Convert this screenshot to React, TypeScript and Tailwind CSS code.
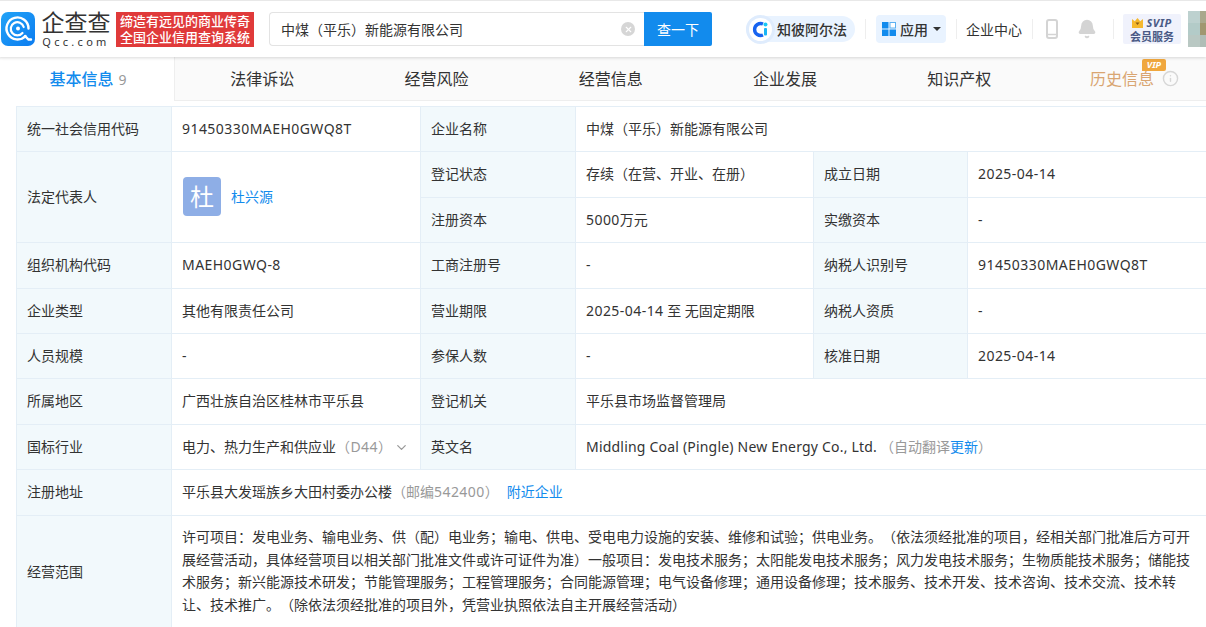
import { ReactNode } from "react";
import { ChevronDown, Bell, Info, X } from "lucide-react";

const FONT = "font-['Noto_Sans','Noto_Sans_CJK_SC',sans-serif] [text-spacing-trim:space-all]";

function Logo() {
  return (
    <svg width="34" height="34" viewBox="0 0 34 34" className="shrink-0">
      <defs>
        <linearGradient id="qcc" x1="0" y1="0" x2="1" y2="1">
          <stop offset="0" stopColor="#22a3f7" />
          <stop offset="1" stopColor="#0b7cf0" />
        </linearGradient>
      </defs>
      <rect width="34" height="34" rx="7" fill="url(#qcc)" />
      <path d="M24.5 24a11 11 0 1 1 3-7.5" fill="none" stroke="#fff" strokeWidth="2.4" strokeLinecap="round" />
      <path d="M21.5 21a6.6 6.6 0 1 1 1.2-6" fill="none" stroke="#fff" strokeWidth="2.2" strokeLinecap="round" />
      <circle cx="17" cy="16.5" r="2" fill="#fff" />
      <path d="M24 24l3.5 3.5h2.5" fill="none" stroke="#fff" strokeWidth="2.4" strokeLinecap="round" />
    </svg>
  );
}

function Avatar() {
  return (
    <div className="ml-[7px] grid h-[36px] flex-1 grid-cols-[12px_1fr] grid-rows-3">
      <div className="bg-[#bdd1cf]" />
      <div className="bg-[#a9a88c]" />
      <div className="bg-[#b3cbc8]" />
      <div className="bg-[#a09770]" />
      <div className="bg-[#b9c8c3]" />
      <div className="bg-[#b0bdb6]" />
    </div>
  );
}

function Header() {
  return (
    <header className="relative z-10 flex h-[57px] items-center border-t border-[#e8e8e8] bg-white pl-px shadow-[0_1px_3px_rgba(0,0,0,0.15)]">
      <Logo />
      <div className="ml-[6px] flex w-[70px] shrink-0 flex-col items-center leading-none text-[#333]">
        <span className="text-[23px] leading-[23px]">企查查</span>
        <span className="mt-[2px] whitespace-nowrap text-[11px] leading-[11px] tracking-[3.3px]">Qcc.com</span>
      </div>
      <div className="ml-[5px] flex h-[35px] w-[138px] shrink-0 flex-col items-center justify-center bg-[#e03a3a] text-[13px] font-medium leading-[16px] text-white">
        <span>缔造有远见的商业传奇</span>
        <span>全国企业信用查询系统</span>
      </div>
      <div className="ml-[15px] flex h-[34px] w-[375px] shrink-0 items-center rounded-l-[4px] border border-r-0 border-[#e3e3e3] pl-[11px] pr-[9px] text-[14px] text-[#333]">
        <span className="flex-1">中煤（平乐）新能源有限公司</span>
        <span className="flex h-[14px] w-[14px] items-center justify-center rounded-full bg-[#d6d6d6]">
          <X size={9} color="#fff" strokeWidth={3} />
        </span>
      </div>
      <button className="h-[34px] w-[68px] shrink-0 rounded-r-[2px] bg-[#128bed] text-[14px] text-white">查一下</button>
      <div className="ml-[34px] flex h-[26px] w-[109px] shrink-0 items-center rounded-full bg-[#e9f3ff] text-[14px] font-medium text-[#333]">
        <svg width="29" height="29" viewBox="0 0 29 29" className="shrink-0">
          <circle cx="14.5" cy="14.5" r="14.5" fill="#dfecfd" />
          <circle cx="14.5" cy="14.5" r="11.5" fill="#fff" />
          <path d="M17 9a6 6 0 1 0 0 11" fill="none" stroke="#1763f0" strokeWidth="3.4" />
          <rect x="18" y="13" width="3" height="7.5" rx="1" fill="#19b5f5" />
          <circle cx="19.5" cy="9.5" r="2" fill="#19c8f5" />
        </svg>
        <span className="ml-[2px]">知彼阿尔法</span>
      </div>
      <div className="ml-[10px] h-[20px] w-px bg-[#eee]" />
      <div className="ml-[10px] flex h-[28px] w-[70px] shrink-0 items-center rounded-[4px] bg-[#e9f3ff] pl-[6px] text-[14px] font-medium text-[#333]">
        <svg width="14" height="14" viewBox="0 0 14 14" className="shrink-0">
          <rect width="6.5" height="6.5" fill="#128bed" />
          <rect x="8" y=".5" width="5.5" height="5.5" fill="#fff" stroke="#5bb0f2" />
          <rect y="7.5" width="6.5" height="6.5" fill="#128bed" />
          <rect x="7.5" y="7.5" width="6.5" height="6.5" fill="#128bed" />
        </svg>
        <span className="ml-[4px]">应用</span>
        <span className="ml-[5px] h-0 w-0 border-x-[4px] border-t-[4px] border-x-transparent border-t-[#333]" />
      </div>
      <div className="ml-[10px] h-[20px] w-px bg-[#eee]" />
      <span className="ml-[9px] w-[56px] shrink-0 text-[14px] text-[#333]">企业中心</span>
      <div className="ml-[10px] h-[20px] w-px bg-[#eee]" />
      <svg width="12" height="20" viewBox="0 0 12 20" className="ml-[13px] shrink-0">
        <rect x="1" y="1" width="10" height="18" rx="2" fill="none" stroke="#d4d4d4" strokeWidth="2" />
        <path d="M1 15.5h10" stroke="#d4d4d4" strokeWidth="1.5" />
      </svg>
      <Bell size={20} color="#d4d4d4" fill="#d4d4d4" className="ml-[19px] shrink-0" />
      <div className="ml-[16px] h-[20px] w-px bg-[#eee]" />
      <div className="ml-[9px] flex h-[30px] w-[58px] shrink-0 flex-col items-center justify-center rounded-[2px] bg-[#f0f2fc] text-[#4a5a85]">
        <span className="flex items-center text-[11px] font-bold italic leading-[14px] tracking-[0.5px]">
          <svg width="11" height="10" viewBox="0 0 11 10" className="mr-[3px]">
            <path d="M0 1l2.8 2.2L5.500 0l2.700 3.200L11 1v9H0z" fill="#f5b82e" />
            <path d="M3.500 4.500h4L5.500 7z" fill="#8a5a10" />
          </svg>
          SVIP
        </span>
        <span className="text-[11px] font-bold leading-[13px]">会员服务</span>
      </div>
      <Avatar />
    </header>
  );
}

const TABS = ["法律诉讼", "经营风险", "经营信息", "企业发展", "知识产权"];

function Tabs() {
  return (
    <div className="flex h-[44px] w-[1221px] bg-[#fafafa] text-[16px] text-[#333]">
      <div className="flex w-[175px] shrink-0 items-center justify-center rounded-tl-[4px] border-r border-[#eee] bg-white pl-[2px]">
        <span className="font-medium text-[#128bed]">基本信息</span>
        <span className="ml-[5px] text-[14px] text-[#999]">9</span>
      </div>
      {TABS.map((t) => (
        <div key={t} className="flex w-[174.3px] shrink-0 items-center justify-center border-b border-[#eee]">
          {t}
        </div>
      ))}
      <div className="flex w-[174px] shrink-0 items-center justify-center border-b border-[#eee] pl-[2px]">
        <span className="relative text-[#d9a571]">
          历史信息
          <span className="absolute -top-[8px] right-[-12px] h-[12px] w-[24px] rounded-[2px] rounded-bl-none bg-[#f0a73e] text-center text-[9px] font-bold italic leading-[12px] text-white">
            VIP
          </span>
        </span>
        <Info size={17} color="#d6d6d6" className="ml-[8px] shrink-0" />
      </div>
    </div>
  );
}

function Th({ children, rowSpan }: { children: ReactNode; rowSpan?: number }) {
  return (
    <td rowSpan={rowSpan} className="border border-[#e4eef6] bg-[#f2f9fc] px-[10px] align-middle text-[#333]">
      {children}
    </td>
  );
}

function Td({ children, colSpan, rowSpan }: { children: ReactNode; colSpan?: number; rowSpan?: number }) {
  return (
    <td colSpan={colSpan} rowSpan={rowSpan} className="border border-[#e4eef6] bg-white px-[10px] align-middle text-[#333]">
      {children}
    </td>
  );
}

// digits and codes run a little wider in the original font
function Code({ children }: { children: ReactNode }) {
  return <span className="tracking-[0.45px]">{children}</span>;
}

function InfoTable() {
  return (
    <table className="w-[1216px] table-fixed border-collapse text-[14px] leading-[24px]">
      <colgroup>
        <col className="w-[155px]" />
        <col className="w-[249px]" />
        <col className="w-[155px]" />
        <col className="w-[238px]" />
        <col className="w-[154px]" />
        <col />
      </colgroup>
      <tbody>
        <tr className="h-[45px]">
          <Th>统一社会信用代码</Th>
          <Td><Code>91450330MAEH0GWQ8T</Code></Td>
          <Th>企业名称</Th>
          <Td colSpan={3}>中煤（平乐）新能源有限公司</Td>
        </tr>
        <tr className="h-[46px] [&>td]:pb-px">
          <Th rowSpan={2}>法定代表人</Th>
          <Td rowSpan={2}>
            <div className="flex items-center pl-px">
              <span className="flex h-[39px] w-[38px] items-center justify-center rounded-[4px] bg-[#8eaee6] text-[24px] text-white">杜</span>
              <span className="ml-[10px] text-[#128bed]">杜兴源</span>
            </div>
          </Td>
          <Th>登记状态</Th>
          <Td>存续（在营、开业、在册）</Td>
          <Th>成立日期</Th>
          <Td><Code>2025-04-14</Code></Td>
        </tr>
        <tr className="h-[45px]">
          <Th>注册资本</Th>
          <Td><Code>5000</Code>万元</Td>
          <Th>实缴资本</Th>
          <Td>-</Td>
        </tr>
        <tr className="h-[46px] [&>td]:pb-px">
          <Th>组织机构代码</Th>
          <Td><Code>MAEH0GWQ-8</Code></Td>
          <Th>工商注册号</Th>
          <Td>-</Td>
          <Th>纳税人识别号</Th>
          <Td><Code>91450330MAEH0GWQ8T</Code></Td>
        </tr>
        <tr className="h-[45px]">
          <Th>企业类型</Th>
          <Td>其他有限责任公司</Td>
          <Th>营业期限</Th>
          <Td><Code>2025-04-14</Code> 至 无固定期限</Td>
          <Th>纳税人资质</Th>
          <Td>-</Td>
        </tr>
        <tr className="h-[45px]">
          <Th>人员规模</Th>
          <Td>-</Td>
          <Th>参保人数</Th>
          <Td>-</Td>
          <Th>核准日期</Th>
          <Td><Code>2025-04-14</Code></Td>
        </tr>
        <tr className="h-[46px] [&>td]:pb-px">
          <Th>所属地区</Th>
          <Td>广西壮族自治区桂林市平乐县</Td>
          <Th>登记机关</Th>
          <Td colSpan={3}>平乐县市场监督管理局</Td>
        </tr>
        <tr className="h-[45px]">
          <Th>国标行业</Th>
          <Td>
            <span className="flex items-center">
              电力、热力生产和供应业
              <span className="tracking-[0.45px] text-[#999]">（D44）</span>
              <ChevronDown size={15} color="#999" className="ml-[1px]" />
            </span>
          </Td>
          <Th>英文名</Th>
          <Td colSpan={3}>
            <span className="tracking-[0.2px]">Middling Coal (Pingle) New Energy Co., Ltd.</span>
            <span className="ml-[3px] text-[#999]">
              （自动翻译<span className="text-[#128bed]">更新</span>）
            </span>
          </Td>
        </tr>
        <tr className="h-[46px] [&>td]:pb-px">
          <Th>注册地址</Th>
          <Td colSpan={5}>
            平乐县大发瑶族乡大田村委办公楼
            <span className="text-[#999]">（邮编<Code>542400</Code>）</span>
            <span className="ml-[8px] text-[#128bed]">附近企业</span>
          </Td>
        </tr>
        <tr>
          <Th>经营范围</Th>
          <Td colSpan={5}>
            <div className="w-[1018px] pb-[11px] pt-[10px] leading-[22.5px]">
              许可项目：发电业务、输电业务、供（配）电业务；输电、供电、受电电力设施的安装、维修和试验；供电业务。（依法须经批准的项目，经相关部门批准后方可开展经营活动，具体经营项目以相关部门批准文件或许可证件为准）一般项目：发电技术服务；太阳能发电技术服务；风力发电技术服务；生物质能技术服务；储能技术服务；新兴能源技术研发；节能管理服务；工程管理服务；合同能源管理；电气设备修理；通用设备修理；技术服务、技术开发、技术咨询、技术交流、技术转让、技术推广。（除依法须经批准的项目外，凭营业执照依法自主开展经营活动）
            </div>
          </Td>
        </tr>
      </tbody>
    </table>
  );
}

export default function App() {
  return (
    <div className={`h-[627px] w-[1206px] overflow-hidden bg-white ${FONT}`}>
      <Header />
      <Tabs />
      <div className="pl-4 pt-[5px]">
        <InfoTable />
      </div>
    </div>
  );
}
